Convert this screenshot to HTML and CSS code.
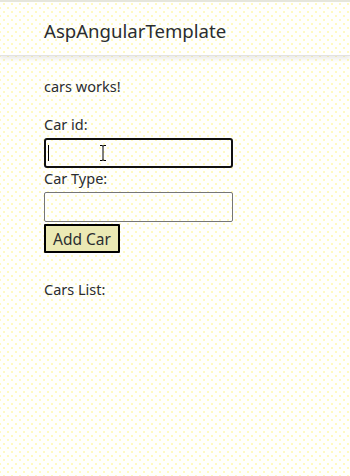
FILE: index.html
```html
<!DOCTYPE html>
<html>
<head>
<meta charset="utf-8">
<link rel="stylesheet" href="styles.css">
</head>
<body>
<header class="navbar">
  <span class="brand">AspAngularTemplate</span>
</header>
<main class="content">
  <p class="works">cars works!</p>
  <form class="car-form">
    <label class="field-label">Car id:</label>
    <div class="input-wrap">
      <input class="field focused" type="text">
      <span class="caret"></span>
    </div>
    <label class="field-label">Car Type:</label>
    <input class="field" type="text">
    <button class="add-btn" type="button">Add Car</button>
  </form>
  <p class="list-title">Cars List:</p>
</main>
<svg class="ibeam" width="8" height="16" viewBox="0 0 8 16">
  <path d="M1 0.5 H3 Q4 0.5 4 1.5 Q4 0.5 5 0.5 H7 M4 1.5 V14.5 M1 15.5 H3 Q4 15.5 4 14.5 Q4 15.5 5 15.5 H7" fill="none" stroke="#000" stroke-width="1"/>
</svg>
</body>
</html>
```
FILE: styles.css
```css
html, body {
  margin: 0;
  padding: 0;
}
body {
  width: 350px;
  height: 476px;
  overflow: hidden;
  position: relative;
  font-family: "Noto Sans", "Open Sans", sans-serif;
  color: #2a2d30;
  background-color: #fffffd;
  background-image:
    radial-gradient(circle, #fff37e 0.55px, transparent 0.85px),
    radial-gradient(circle, #fff37e 0.55px, transparent 0.85px);
  background-size: 8px 8px, 8px 8px;
  background-position: 0 0, 4px 4px;
}
.navbar {
  height: 56px;
  box-sizing: border-box;
  border-top: 2px solid #e6e6dc;
  border-bottom: 1px solid #e2e2e2;
  box-shadow: 0 3px 4px rgba(0,0,0,0.08);
  padding: 17px 0 0 44px;
}
.brand {
  font-size: 18.6px;
  line-height: 24px;
}
.content {
  padding: 0 0 0 44px;
}
.works {
  margin: 20px 0 0;
  font-size: 14.5px;
  line-height: 20px;
}
.car-form {
  display: flex;
  flex-direction: column;
  align-items: flex-start;
  margin-top: 18px;
}
.field-label {
  font-size: 14.5px;
  line-height: 20px;
  margin-bottom: 4px;
}
.input-wrap {
  position: relative;
}
.field {
  width: 189px;
  height: 30px;
  box-sizing: border-box;
  border: 1px solid #767676;
  border-radius: 2px;
  background: transparent;
  margin: 0;
  padding: 0 3px;
  font: inherit;
}
.field.focused {
  border: 2px solid #101010;
  border-radius: 3px;
  outline: none;
}
.caret {
  position: absolute;
  left: 4px;
  top: 7px;
  width: 1px;
  height: 16px;
  background: #000;
}
.add-btn {
  margin-top: 2px;
  height: 29px;
  box-sizing: border-box;
  padding: 0 7px;
  border: 2px solid #000;
  border-radius: 1px;
  background: #ebe9b4;
  font-family: inherit;
  font-size: 15.5px;
  color: #2a2d30;
}
.list-title {
  margin: 26px 0 0;
  font-size: 14.5px;
  line-height: 20px;
}
.ibeam {
  position: absolute;
  left: 99px;
  top: 145px;
}
```
